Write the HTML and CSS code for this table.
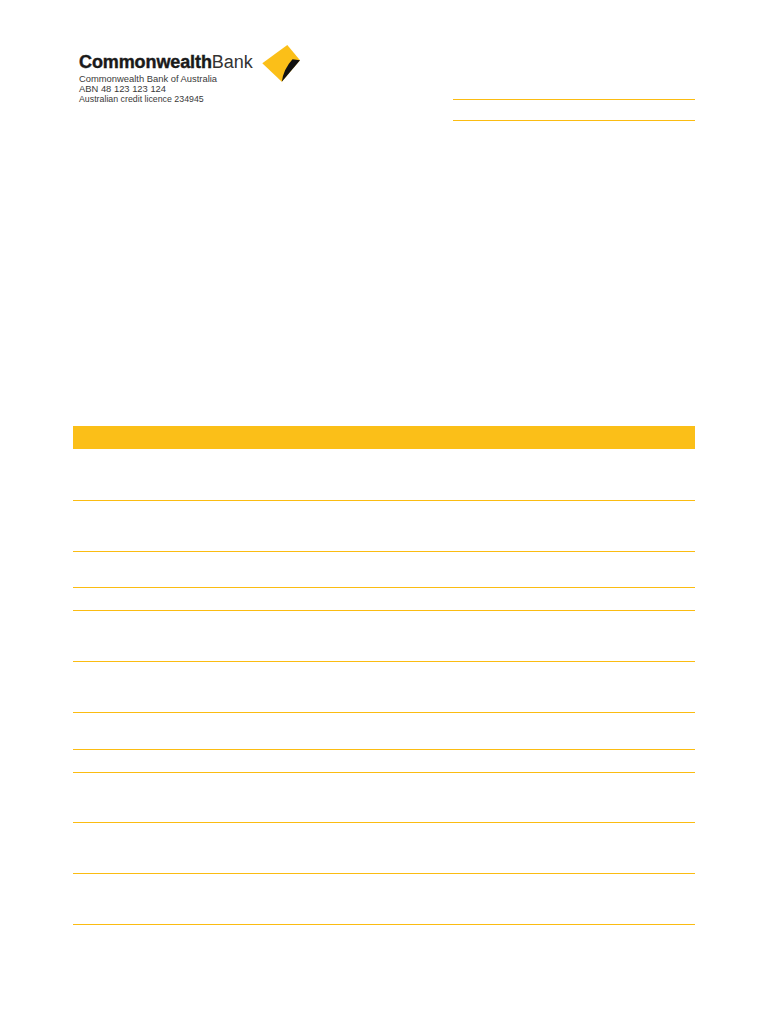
FILE: index.html
```html
<!DOCTYPE html>
<html lang="en">
<head>
<meta charset="utf-8">
<title>Commonwealth Bank</title>
<link rel="stylesheet" href="styles.css">
</head>
<body>
<div class="page">
  <header class="header">
    <div class="brand">
      <div class="brand-text">
        <div class="wordmark"><span class="wm-bold">Commonwealth</span><span class="wm-light">Bank</span></div>
        <div class="brand-line">Commonwealth Bank of Australia</div>
        <div class="brand-line">ABN 48 123 123 124</div>
        <div class="brand-line small">Australian credit licence 234945</div>
      </div>
      <svg class="diamond" viewBox="260 43 42 42" width="42" height="42" aria-hidden="true">
        <path d="M287.3 45 L300 60.3 L281.8 81.8 L262.3 63.3 Z" fill="#fbbf18"/>
        <path d="M292.5 59.2 L300 60.3 L281.8 81.8 Q283.5 69 292.5 59.2 Z" fill="#111"/>
      </svg>
    </div>
    <div class="ref-lines">
      <div class="ref-line"></div>
      <div class="ref-line"></div>
    </div>
  </header>

  <div class="table">
    <div class="thead"></div>
    <div class="row h51"></div>
    <div class="row h50"></div>
    <div class="row h35"></div>
    <div class="row h22"></div>
    <div class="row h50"></div>
    <div class="row h50"></div>
    <div class="row h36"></div>
    <div class="row h22"></div>
    <div class="row h49"></div>
    <div class="row h50"></div>
    <div class="row h50"></div>
  </div>
</div>
</body>
</html>
```
FILE: styles.css
```css
html, body {
  margin: 0;
  padding: 0;
  background: #ffffff;
}

body {
  font-family: "Liberation Sans", Arial, sans-serif;
  color: #231f20;
}

.page {
  width: 768px;
  padding: 0 73px;
  box-sizing: border-box;
}

.header {
  display: flex;
  justify-content: space-between;
  align-items: flex-start;
  padding-top: 43px;
}

.brand {
  display: flex;
  align-items: flex-start;
  margin-left: 6px;
}

.brand-text {
  width: 181px;
  margin-top: 10px;
}

.wordmark {
  font-size: 18px;
  line-height: 18px;
  white-space: nowrap;
  color: #1a1a1a;
}

.wm-bold {
  font-weight: 700;
  letter-spacing: -0.1px;
  -webkit-text-stroke: 0.4px #1a1a1a;
}

.wm-light {
  font-weight: 400;
  color: #333;
}

.brand-line {
  font-size: 9.4px;
  line-height: 10px;
  white-space: nowrap;
  color: #3a3a3a;
}

.wordmark + .brand-line {
  margin-top: 3px;
}

.brand-line.small {
  font-size: 8.8px;
}

.diamond {
  display: block;
}

.ref-lines {
  width: 242px;
  margin-top: 56px;
}

.ref-line {
  height: 20px;
  border-top: 1px solid #fbbc12;
}

.ref-line + .ref-line {
  height: 0;
}

.table {
  margin-top: 305px;
}

.thead {
  height: 23px;
  background: #fbbf18;
}

.row {
  border-bottom: 1px solid #fbbc12;
}

.h22 { height: 22px; }
.h35 { height: 35px; }
.h36 { height: 36px; }
.h49 { height: 49px; }
.h50 { height: 50px; }
.h51 { height: 51px; }
```
